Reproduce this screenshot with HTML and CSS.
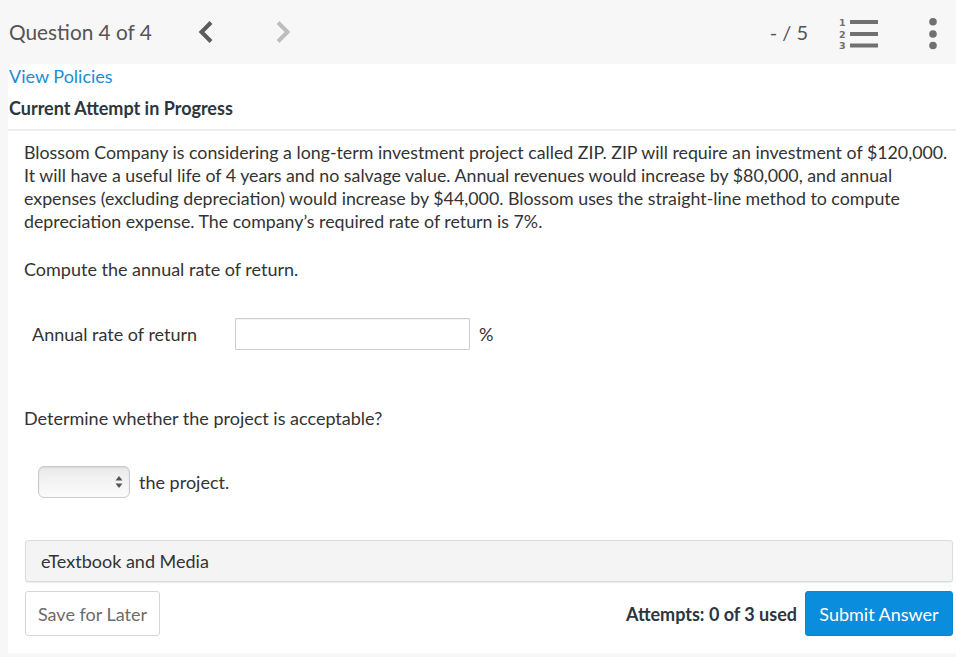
FILE: index.html
```html
<!DOCTYPE html>
<html lang="en">
<head>
<meta charset="utf-8">
<title>Question 4 of 4</title>
<link rel="stylesheet" href="styles.css">
</head>
<body>
<header class="topbar">
  <span class="q-title">Question 4 of 4</span>
  <span class="nav-btn nav-prev" aria-label="Previous">
    <svg width="16" height="24" viewBox="0 0 16 24"><polyline points="13,2.5 3.5,12 13,21.5" fill="none" stroke="#5c5c5c" stroke-width="4" stroke-linejoin="miter"/></svg>
  </span>
  <span class="nav-btn nav-next" aria-label="Next">
    <svg width="16" height="24" viewBox="0 0 16 24"><polyline points="3,2.5 12.5,12 3,21.5" fill="none" stroke="#bdbdbd" stroke-width="4" stroke-linejoin="miter"/></svg>
  </span>
  <span class="score">- / 5</span>
  <span class="list-icon" aria-label="Question list">
    <svg width="40" height="34" viewBox="0 0 40 34">
      <text x="0" y="9.5" class="num">1</text>
      <text x="0" y="21.5" class="num">2</text>
      <text x="0" y="33" class="num">3</text>
      <rect x="11" y="4" width="28" height="4" fill="#707070"/>
      <rect x="11" y="16" width="28" height="4" fill="#707070"/>
      <rect x="11" y="27.5" width="28" height="4" fill="#707070"/>
    </svg>
  </span>
  <span class="more-icon" aria-label="More">
    <svg width="10" height="34" viewBox="0 0 10 34">
      <circle cx="5" cy="5.7" r="3.8" fill="#707070"/>
      <circle cx="5" cy="18" r="3.8" fill="#707070"/>
      <circle cx="5" cy="29.5" r="3.8" fill="#707070"/>
    </svg>
  </span>
</header>

<main class="panel">
  <div class="panel-head">
    <a class="policies" href="#">View Policies</a>
    <h2 class="attempt-title">Current Attempt in Progress</h2>
  </div>

  <div class="question">
    <p class="stem">Blossom Company is considering a long-term investment project called ZIP. ZIP will require an investment of $120,000. It will have a useful life of 4 years and no salvage value. Annual revenues would increase by $80,000, and annual expenses (excluding depreciation) would increase by $44,000. Blossom uses the straight-line method to compute depreciation expense. The company’s required rate of return is 7%.</p>

    <p class="prompt">Compute the annual rate of return.</p>

    <div class="answer-row">
      <span class="answer-label">Annual rate of return</span>
      <input class="answer-input" type="text" aria-label="Annual rate of return">
      <span class="unit">%</span>
    </div>

    <p class="prompt prompt-second">Determine whether the project is acceptable?</p>

    <div class="select-row">
      <div class="fake-select" role="listbox" aria-label="Accept or reject">
        <svg width="8" height="14" viewBox="0 0 8 14"><polygon points="4,1 7.5,5.5 0.5,5.5" fill="#555"/><polygon points="0.5,8.5 7.5,8.5 4,13" fill="#555"/></svg>
      </div>
      <span class="select-tail">the project.</span>
    </div>

    <div class="media-bar">eTextbook and Media</div>

    <div class="actions">
      <button class="btn btn-save" type="button">Save for Later</button>
      <span class="attempts">Attempts: 0 of 3 used</span>
      <button class="btn btn-submit" type="button">Submit Answer</button>
    </div>
  </div>
</main>
</body>
</html>
```

FILE: styles.css
```css
* { box-sizing: border-box; }

html, body {
  margin: 0;
  padding: 0;
}

body {
  background: #f7f7f7;
  font-family: Lato, "Open Sans", "Liberation Sans", sans-serif;
  color: #333;
  font-size: 18px;
  width: 956px;
  height: 657px;
  overflow: hidden;
}

.topbar {
  height: 64px;
  display: flex;
  align-items: center;
  padding-left: 9px;
  color: #555;
}

.q-title {
  font-size: 20.8px;
  line-height: 24px;
}

.nav-btn {
  display: flex;
  align-items: center;
}

.nav-prev { margin-left: 46px; }
.nav-next { margin-left: 61px; }

.score {
  margin-left: auto;
  font-size: 20px;
  line-height: 24px;
  margin-right: 31px;
}

.list-icon {
  display: flex;
  margin-top: 2px;
}

.list-icon .num {
  font-family: "DejaVu Sans", sans-serif;
  font-weight: bold;
  font-size: 9.5px;
  fill: #707070;
}

.more-icon {
  display: flex;
  margin-left: 49px;
  margin-right: 18px;
  margin-top: 2px;
}

.panel {
  display: block;
  margin-left: 8px;
  height: 589px;
  background: #fff;
}

.panel-head {
  padding: 2px 0 11px 1px;
  border-bottom: 2px solid #ececec;
}

.policies {
  display: block;
  color: #1a8cd8;
  text-decoration: none;
  line-height: 20px;
}

.attempt-title {
  margin: 12px 0 0;
  font-size: 18px;
  line-height: 20px;
  font-weight: 700;
  color: #2b3640;
}

.question {
  padding: 10px 3px 0 16px;
}

.stem {
  margin: 0;
  font-size: 17.8px;
  line-height: 23px;
}

.prompt {
  margin: 25px 0 0;
  line-height: 23px;
}

.answer-row {
  display: flex;
  align-items: center;
  margin-top: 37px;
  padding-left: 8px;
  height: 32px;
}

.answer-label {
  width: 203px;
  line-height: 23px;
}

.answer-input {
  width: 235px;
  height: 32px;
  border: 1px solid #cdcdcd;
  box-shadow: inset 0 1px 1px rgba(0, 0, 0, 0.06);
  border-radius: 1px;
  padding: 0 6px;
  font: inherit;
  margin: 0;
}

.unit {
  margin-left: 9px;
  line-height: 23px;
}

.prompt-second {
  margin-top: 57px;
}

.select-row {
  display: flex;
  align-items: center;
  margin-top: 36px;
  padding-left: 14px;
  height: 32px;
}

.fake-select {
  width: 92px;
  height: 32px;
  border: 1px solid #c9c9c9;
  border-radius: 6px;
  background: linear-gradient(to bottom, #e9e9e9 0%, #f3f3f3 45%, #fbfbfb 100%);
  box-shadow: inset 0 1px 2px rgba(0, 0, 0, 0.08);
  display: flex;
  align-items: center;
  justify-content: flex-end;
  padding-right: 6px;
}

.select-tail {
  margin-left: 9px;
  line-height: 23px;
}

.media-bar {
  margin: 42px 0 0 1px;
  height: 42px;
  background: #f4f4f4;
  border: 1px solid #dcdcdc;
  border-radius: 3px;
  box-shadow: 0 1px 1px rgba(0, 0, 0, 0.08);
  padding-left: 15px;
  display: flex;
  align-items: center;
  color: #333;
}

.actions {
  display: flex;
  align-items: center;
  margin: 9px 0 0 1px;
}

.btn {
  font: inherit;
  height: 45px;
  border-radius: 3px;
  margin: 0;
  cursor: pointer;
  white-space: nowrap;
}

.btn-save {
  width: 135px;
  background: #fff;
  color: #6b6b6b;
  border: 1px solid #d6d6d6;
  padding: 0;
  text-align: center;
}

.attempts {
  margin-left: auto;
  margin-right: 8px;
  font-weight: 700;
  color: #2b3640;
}

.btn-submit {
  width: 148px;
  background: #0a8ddd;
  color: #fff;
  border: 1px solid #0a86d2;
  padding: 0;
  text-align: center;
}
```
